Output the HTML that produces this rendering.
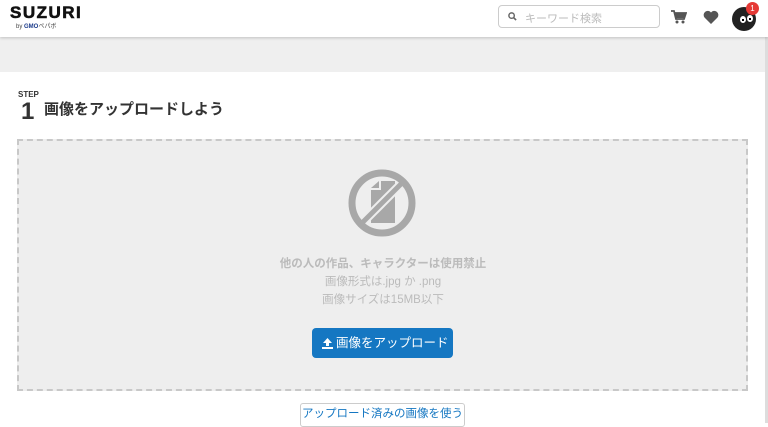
<!DOCTYPE html>
<html><head><meta charset="utf-8"><style>
*{margin:0;padding:0;box-sizing:border-box}
body{width:768px;height:423px;overflow:hidden;background:#fff;font-family:"Liberation Sans","Noto Sans CJK JP",sans-serif;position:relative}
.hdr{position:absolute;left:0;top:0;width:768px;height:37px;background:#fff;box-shadow:0 1px 3px rgba(0,0,0,.2);z-index:2}
.band{position:absolute;left:0;top:37px;width:768px;height:35px;background:#efefef}
.abs{position:absolute}
</style></head><body>
<div class="hdr">
 <div class="abs" style="left:10px;top:3px;font-weight:900;font-size:17px;letter-spacing:1.5px;color:#111;-webkit-text-stroke:0.6px #111">SUZURI</div>
 <div class="abs" style="left:16px;top:21px;font-size:6px;color:#444">by <b style="color:#1a3a8a">GMO</b>ペパボ</div>
 <div class="abs" style="left:498px;top:5px;width:162px;height:23px;border:1px solid #ccc;border-radius:4px;font-size:11px;color:#bbb;padding:4px 0 0 26px">キーワード検索
  <svg class="abs" style="left:9px;top:6px" width="9" height="9" viewBox="0 0 10 10"><circle cx="4" cy="4" r="3" fill="none" stroke="#666" stroke-width="1.6"/><path d="M6 6L9 9" stroke="#666" stroke-width="1.8"/></svg></div>
 <svg class="abs" style="left:671px;top:10px" width="16" height="14" viewBox="0 0 16 14"><path d="M0 1h3l2 8h8l2-6H4" fill="none" stroke="#555" stroke-width="1.8"/><rect x="4.5" y="3" width="9.5" height="5" fill="#555"/><circle cx="6" cy="12" r="1.5" fill="#555"/><circle cx="12" cy="12" r="1.5" fill="#555"/></svg>
 <svg class="abs" style="left:703px;top:10px" width="16" height="14" viewBox="0 0 16 14"><path d="M8 14L1.5 7.5A3.8 3.8 0 0 1 8 2.5A3.8 3.8 0 0 1 14.5 7.5Z" fill="#555"/></svg>
 <div class="abs" style="left:732px;top:7px;width:24px;height:24px;border-radius:50%;background:#222"></div>
 <div class="abs" style="left:740px;top:16px;width:6px;height:7px;border-radius:50%;background:#fff"></div>
 <div class="abs" style="left:747px;top:15px;width:6px;height:7px;border-radius:50%;background:#fff"></div>
 <div class="abs" style="left:742px;top:19px;width:2px;height:2px;background:#000"></div>
 <div class="abs" style="left:749px;top:18px;width:2px;height:2px;background:#000"></div>
 <div class="abs" style="left:746px;top:2px;width:13px;height:13px;border-radius:50%;background:#e53935;color:#fff;font-size:8px;text-align:center;line-height:13px">1</div>
</div>
<div class="band"></div>
<div class="abs" style="left:765px;top:37px;width:3px;height:386px;background:#ddd"></div>
<div class="abs" style="left:18px;top:90px;font-size:8px;font-weight:bold;color:#333">STEP</div>
<div class="abs" style="left:21px;top:99px;font-size:24px;font-weight:bold;color:#333;line-height:26px">1</div>
<div class="abs" style="left:44px;top:98px;font-size:15px;font-weight:bold;color:#333">画像をアップロードしよう</div>
<div class="abs" style="left:17px;top:139px;width:731px;height:252px;background:#eee;border:2px dashed #c8c8c8"></div>
<svg class="abs" style="left:347px;top:168px" width="70" height="70" viewBox="0 0 70 70">
 <path d="M24 20l8-7h16v42H24Z" fill="#a8a8a8"/>
 <path d="M24 21h9v-9" fill="none" stroke="#eee" stroke-width="2"/>
 <path d="M15 55L55 15" stroke="#eee" stroke-width="9"/>
 <path d="M15 55L55 15" stroke="#a8a8a8" stroke-width="5"/>
 <circle cx="35" cy="35" r="30" fill="none" stroke="#a8a8a8" stroke-width="7"/>
</svg>
<div class="abs" style="left:0;width:766px;top:255px;text-align:center;font-size:11.5px;font-weight:bold;color:#bbb">他の人の作品、キャラクターは使用禁止</div>
<div class="abs" style="left:0;width:766px;top:273px;text-align:center;font-size:11.5px;color:#bbb">画像形式は.jpg か .png</div>
<div class="abs" style="left:0;width:766px;top:291px;text-align:center;font-size:11.5px;color:#bbb">画像サイズは15MB以下</div>
<div class="abs" style="left:312px;top:328px;width:141px;height:30px;background:#1577c2;border-radius:4px;color:#fff;font-size:12.5px;line-height:30px;padding-left:24px">画像をアップロード
 <svg class="abs" style="left:10px;top:9px" width="11" height="12" viewBox="0 0 11 12"><path d="M5.5 1L1 6h3v3h3V6h3Z M0 10h11v2H0Z" fill="#fff"/></svg></div>
<div class="abs" style="left:300px;top:403px;width:165px;height:24px;border:1px solid #ccc;border-radius:3px;font-size:11.5px;color:#1577c2;text-align:center;line-height:20px">アップロード済みの画像を使う</div>
</body></html>
